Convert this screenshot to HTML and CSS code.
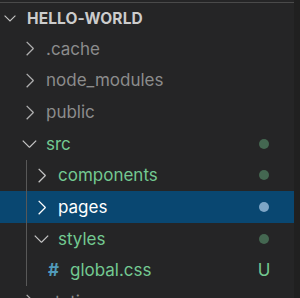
FILE: index.html
```html
<!DOCTYPE html>
<html>
<head>
<meta charset="utf-8">
<link rel="stylesheet" href="styles.css">
</head>
<body>
<div class="window">
  <div class="explorer">
    <div class="topline"></div>
    <div class="header">
      <svg class="hchev" viewBox="0 0 12 7" width="12" height="7"><path d="M0.6 0.6 L6 6 L11.4 0.6" fill="none" stroke="#c5c5c5" stroke-width="1.1"/></svg>
      <span class="htitle">HELLO-WORLD</span>
    </div>
    <div class="row l1 ignored">
      <svg class="twistie" viewBox="0 0 16 16"><path d="M10.072 8.024L5.715 3.667l.618-.62L11 7.716v.618L6.333 13l-.618-.619 4.357-4.357z"/></svg>
      <span class="label">.cache</span>
    </div>
    <div class="row l1 ignored">
      <svg class="twistie" viewBox="0 0 16 16"><path d="M10.072 8.024L5.715 3.667l.618-.62L11 7.716v.618L6.333 13l-.618-.619 4.357-4.357z"/></svg>
      <span class="label">node_modules</span>
    </div>
    <div class="row l1 ignored">
      <svg class="twistie" viewBox="0 0 16 16"><path d="M10.072 8.024L5.715 3.667l.618-.62L11 7.716v.618L6.333 13l-.618-.619 4.357-4.357z"/></svg>
      <span class="label">public</span>
    </div>
    <div class="row l1 untracked">
      <svg class="twistie" viewBox="0 0 16 16"><path d="M7.976 10.072l4.357-4.357.62.618L8.284 11h-.618L3 6.333l.619-.618 4.357 4.357z"/></svg>
      <span class="label">src</span>
      <span class="deco"><span class="dot"></span></span>
    </div>
    <div class="group">
      <div class="row l2 untracked">
        <svg class="twistie" viewBox="0 0 16 16"><path d="M10.072 8.024L5.715 3.667l.618-.62L11 7.716v.618L6.333 13l-.618-.619 4.357-4.357z"/></svg>
        <span class="label">components</span>
        <span class="deco"><span class="dot"></span></span>
      </div>
      <div class="row l2 selected">
        <svg class="twistie" viewBox="0 0 16 16"><path d="M10.072 8.024L5.715 3.667l.618-.62L11 7.716v.618L6.333 13l-.618-.619 4.357-4.357z"/></svg>
        <span class="label">pages</span>
        <span class="deco"><span class="dot"></span></span>
      </div>
      <div class="row l2 untracked">
        <svg class="twistie" viewBox="0 0 16 16"><path d="M7.976 10.072l4.357-4.357.62.618L8.284 11h-.618L3 6.333l.619-.618 4.357 4.357z"/></svg>
        <span class="label">styles</span>
        <span class="deco"><span class="dot"></span></span>
      </div>
      <div class="row l3 untracked">
        <span class="fileicon">#</span>
        <span class="label">global.css</span>
        <span class="deco"><span class="letter">U</span></span>
      </div>
    </div>
    <div class="row l1 ignored">
      <svg class="twistie" viewBox="0 0 16 16"><path d="M10.072 8.024L5.715 3.667l.618-.62L11 7.716v.618L6.333 13l-.618-.619 4.357-4.357z"/></svg>
      <span class="label">static</span>
    </div>
  </div>
  <div class="scrollstrip"></div>
</div>
</body>
</html>
```
FILE: styles.css
```css
html, body {
  margin: 0;
  padding: 0;
  background: #252526;
  overflow: hidden;
}
.window {
  display: flex;
  width: 300px;
  height: 298px;
  overflow: hidden;
}
.explorer {
  width: 294px;
  flex: none;
  font-family: Inter, "Noto Sans", sans-serif;
}
.scrollstrip {
  flex: 1;
  background: #202020;
}
.topline {
  margin-top: 2px;
  height: 1px;
  background: #4a4a4a;
}
.header {
  height: 30px;
  display: flex;
  align-items: center;
  padding-left: 4px;
}
.hchev {
  width: 12px;
  height: 7px;
  margin-top: 1px;
}
.htitle {
  margin-left: 11px;
  font-weight: 700;
  font-size: 15.5px;
  color: #cccccc;
  letter-spacing: 0.1px;
}
.row {
  height: 31.65px;
  display: flex;
  align-items: center;
  font-size: 17px;
  padding-right: 24px;
}
.twistie {
  width: 23px;
  height: 23px;
  flex: none;
  fill: #c5c5c5;
}
.l1 { padding-left: 18px; }
.l2 { padding-left: 30px; }
.l3 { padding-left: 42px; }
.label {
  margin-left: 5px;
}
.ignored { color: #8c8c8c; }
.ignored .twistie { fill: #b0b0b0; }
.untracked { color: #73c991; }
.selected {
  background: #094771;
  color: #ffffff;
}
.selected .twistie { fill: #ffffff; }
.deco {
  margin-left: auto;
  width: 12px;
  display: flex;
  justify-content: center;
}
.dot {
  width: 10px;
  height: 10px;
  border-radius: 50%;
  background: #446751;
}
.selected .dot { background: #7ea6c6; }
.letter {
  color: #73c991;
  font-size: 17px;
}
.fileicon {
  width: 23px;
  flex: none;
  text-align: center;
  color: #519aba;
  font-weight: 700;
  font-size: 17px;
}
.group {
  position: relative;
}
.group::before {
  content: "";
  position: absolute;
  left: 26px;
  top: 0;
  bottom: 0;
  width: 1px;
  background: #585858;
}
```
